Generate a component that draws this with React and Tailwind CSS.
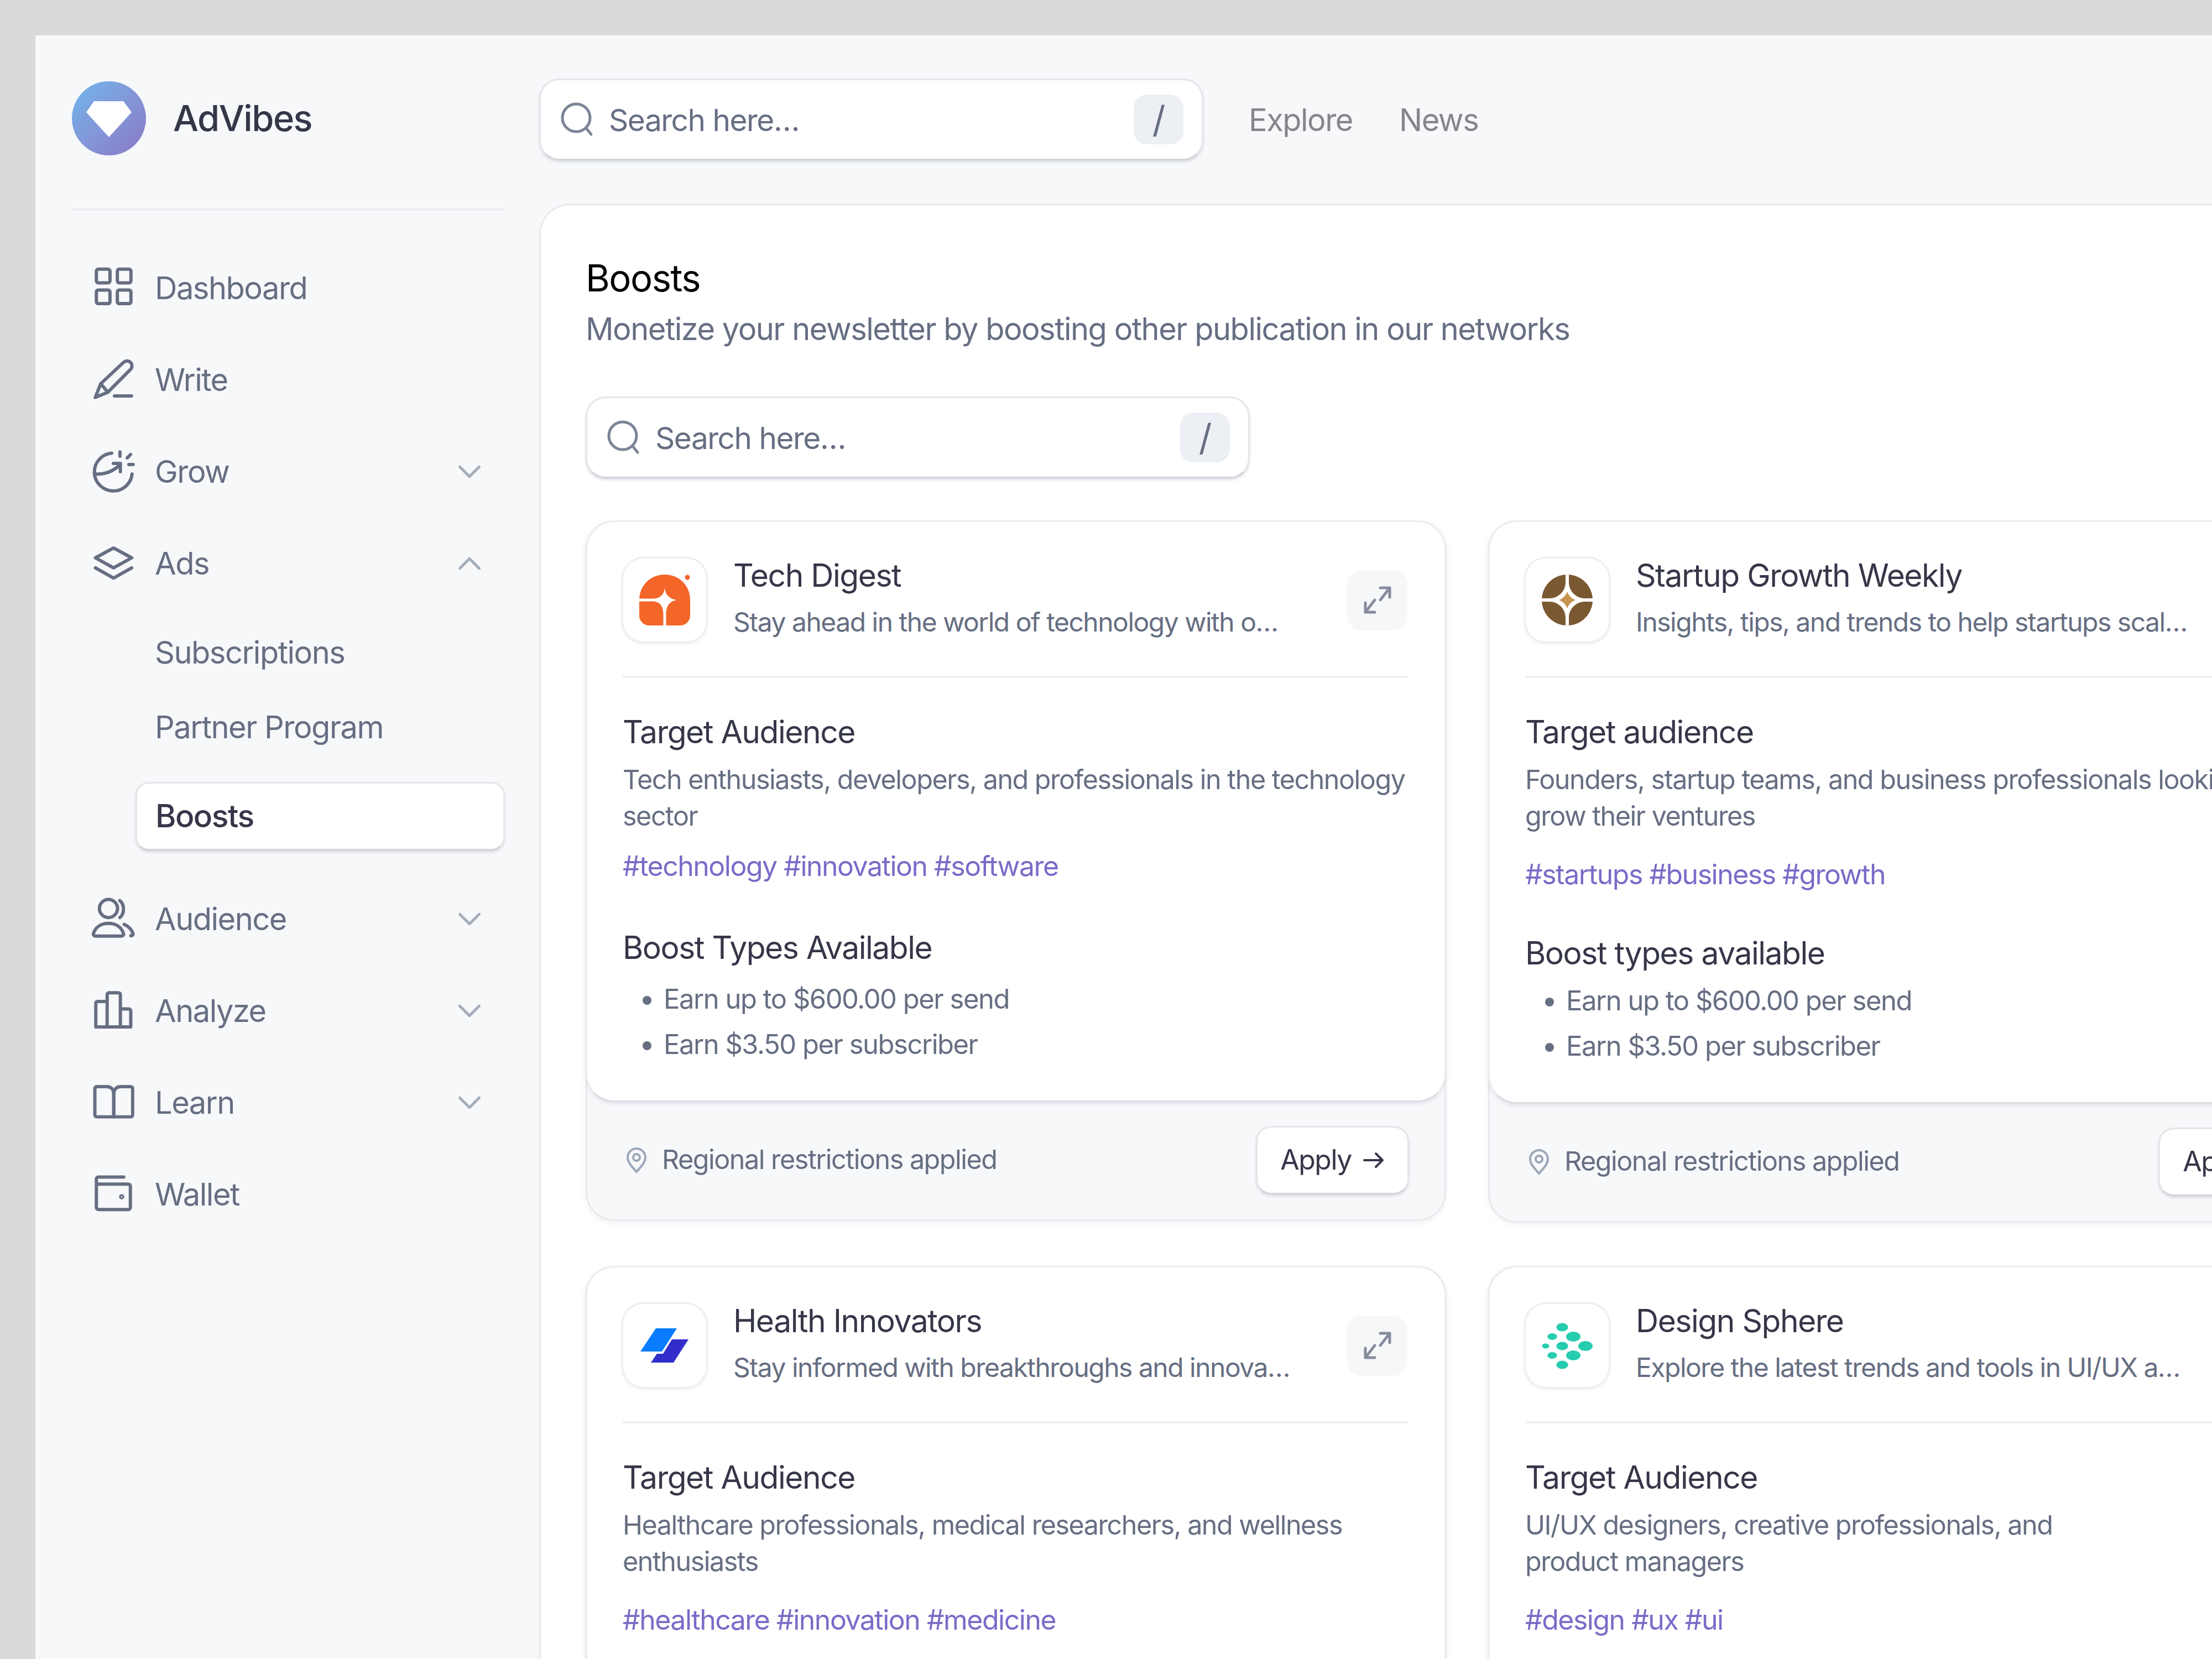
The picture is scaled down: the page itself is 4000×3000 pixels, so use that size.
import React from "react";
import { ChevronDown, ChevronUp } from "lucide-react";

const iconCls = "w-[82px] h-[82px] shrink-0 fill-none stroke-[#666e82] stroke-[1.75]";

function Icon({ children }) {
  return (
    <svg viewBox="0 0 24 24" className={iconCls} strokeLinecap="round" strokeLinejoin="round">
      {children}
    </svg>
  );
}

const navIcons = {
  dashboard: (
    <Icon>
      <rect x="3.300" y="2" width="7.200" height="7.200" rx="1" />
      <rect x="14.400" y="2" width="7.200" height="7.200" rx="1" />
      <rect x="3.300" y="13" width="7.200" height="7.200" rx="1" />
      <rect x="14.400" y="13" width="7.200" height="7.200" rx="1" />
    </Icon>
  ),
  write: (
    <Icon>
      <path d="M2.700 21.300L5.600 14L17.800 2.600A2.600 2.600 0 0 1 21.200 6.600L9.400 18.500z" />
      <path d="M5.600 14l3.800 4.500M12.900 20.500h9" />
    </Icon>
  ),
  grow: (
    <Icon>
      <path d="M11.400 2.200A10 10 0 1 0 22.200 13.200" />
      <path d="M2.300 13.200C7 13.600 12 12 16 8.200" />
      <path d="M12.300 7.600H16V12" />
      <path d="M15.800 1.500v2.300M21.400 2.900l-1.800 1.800M20.500 8.200h2.300" />
    </Icon>
  ),
  ads: (
    <Icon>
      <path d="M12.400 3.800l9.600 5.200-9.600 5.300-9.600-5.300z" />
      <path d="M2.800 14.300l9.600 5.400 9.600-5.400" />
    </Icon>
  ),
  audience: (
    <Icon>
      <circle cx="9.700" cy="6.400" r="4.800" />
      <path d="M15.700 2.200c2.600 2 2.600 7 0 9" />
      <path d="M3 21c-1 0-1.500-.6-1.200-1.500C3 16 6 14.300 9.700 14.300s6.700 1.700 7.900 5.200c.3.900-.2 1.500-1.200 1.500z" />
      <path d="M18 14.800c2.400 1 4.200 3 4.700 5 .1.700-.5 1-1.200 1" />
    </Icon>
  ),
  analyze: (
    <Icon>
      <path d="M9 7H4a1 1 0 0 0-1 1v12.500h18.500V12a1 1 0 0 0-1-1H16" />
      <path d="M9 20.500V3.400a1 1 0 0 1 1-1h5a1 1 0 0 1 1 1v17.100" />
    </Icon>
  ),
  learn: (
    <Icon>
      <path d="M12.500 19.500H3.500a1 1 0 0 1-1-1V4.500a1 1 0 0 1 1-1H9A3.500 3.500 0 0 1 12.500 7z" />
      <path d="M12.500 19.500h9a1 1 0 0 0 1-1V4.500a1 1 0 0 0-1-1H16A3.500 3.500 0 0 0 12.500 7z" />
    </Icon>
  ),
  wallet: (
    <Icon>
      <path d="M3.300 6.500V3.800a1 1 0 0 1 1-1h13.500" />
      <rect x="3.300" y="6.500" width="18" height="13.500" rx="1.200" />
      <circle cx="16.700" cy="13.200" r=".5" />
    </Icon>
  ),
};

function NavRow({ icon, label, chevron }) {
  return (
    <div className="flex items-center h-[166px] pl-[33px] pr-[29px]">
      {navIcons[icon]}
      <span className="ml-[35px] flex-1 text-[56px] text-[#666e82]">{label}</span>
      {chevron === "down" && <ChevronDown className="w-[70px] h-[70px] text-[#a3adba]" strokeWidth={1.7} />}
      {chevron === "up" && <ChevronUp className="w-[70px] h-[70px] text-[#a3adba]" strokeWidth={1.7} />}
    </div>
  );
}

function SearchBox() {
  return (
    <div className="flex items-center w-[1201px] h-[148px] shrink-0 pl-[36px] pr-[33px] bg-white rounded-[36px] border-[3px] border-[#e4e6ea] border-b-[#d3d5db] shadow-[0_3px_4px_rgba(180,184,195,0.45)]">
      <svg viewBox="0 0 60 66" className="w-[60px] h-[66px] shrink-0 fill-none stroke-[#7c8496] stroke-[5]" strokeLinecap="round">
        <circle cx="28" cy="30" r="25" />
        <path d="M47 50l8 10" />
      </svg>
      <span className="ml-[27px] mt-[2px] flex-1 text-[55px] text-[#666e82]">Search here…</span>
      <span className="flex items-center justify-center w-[90px] h-[90px] rounded-[24px] bg-[#eceff4] text-[66px] text-[#666e82]">/</span>
    </div>
  );
}

function TechLogo() {
  return (
    <svg viewBox="0 0 92 92" className="w-[92px] h-[92px]">
      <path d="M0 46C0 20 20 0 46 0s46 20 46 46v28a18 18 0 0 1-18 18H18A18 18 0 0 1 0 74z" fill="#f46528" />
      <path d="M46 24C47 36 54 44 68 46C54 48 48.500 58 48.500 72V92H43.500V72C43.500 58 38 48.500 24 48.500H0V43.500H24C38 43.500 45 36 46 24Z" fill="#fff" />
      <circle cx="87" cy="5" r="4.500" fill="#f46528" />
    </svg>
  );
}

function StartupLogo() {
  return (
    <svg viewBox="0 0 92 92" className="w-[92px] h-[92px]">
      <circle cx="46" cy="46" r="46" fill="#7a5832" />
      <path d="M43 0H49V14C49 30 62 43 78 43H92V49H78C62 49 49 62 49 78V92H43V78C43 62 30 49 14 49H0V43H14C30 43 43 30 43 14Z" fill="#fff" />
      <path d="M46 31Q50 42 61 46Q50 50 46 61Q42 50 31 46Q42 42 46 31Z" fill="#c89350" />
    </svg>
  );
}

function HealthLogo() {
  return (
    <svg viewBox="0 0 92 92" className="w-[92px] h-[92px]">
      <polygon points="30,15 68,15 41,57 2,57" fill="#0a7cff" />
      <polygon points="59,35 89,35 62,77 21,77 32,61 43,61" fill="#332ecb" />
    </svg>
  );
}

function DesignLogo() {
  const dots = [
    [37, 13, 10.700, 7.500], [57, 30, 13, 9], [19, 30, 8.700, 6], [79, 47, 13, 9], [37, 47, 10.700, 7.500],
    [7, 47, 6.500, 4.500], [57, 64, 13, 9], [19, 64, 8.700, 6], [37, 81, 10.700, 7.500],
  ];
  return (
    <svg viewBox="0 0 92 92" className="w-[92px] h-[92px]">
      {dots.map(([cx, cy, rx, ry]) => (
        <ellipse key={`${cx}-${cy}`} cx={cx} cy={cy} rx={rx} ry={ry} fill="#26ccae" />
      ))}
    </svg>
  );
}

function PublicationCard({ logo, name, blurb, audienceTitle, audience, tags, boostTitle, tagsMt, boostMt, listMt }) {
  return (
    <div className="rounded-[52px] bg-[#f7f8fa] border-[3px] border-[#e8e9ec] shadow-[0_4px_8px_rgba(200,203,212,0.25)]">
      <div className="-m-[3px] rounded-[52px] bg-white border-[3px] border-[#eceded] border-b-[#dcdde2] shadow-[0_4px_6px_rgba(190,193,205,0.3)] pl-[62px] pr-[67px] pt-[63px] pb-[60px]">
        <div className="flex items-center h-[156px]">
          <div className="flex items-center justify-center w-[156px] h-[156px] shrink-0 rounded-[40px] border-[3px] border-[#eeeeef] shadow-[0_2px_4px_rgba(200,203,212,0.3)]">
            {logo}
          </div>
          <div className="ml-[46px] -mt-[4px] flex-1 min-w-0">
            <p className="text-[57px] leading-[72px] text-[#353648]">{name}</p>
            <p className="mt-[12px] text-[48px] leading-[72px] text-[#666e82] whitespace-nowrap">{blurb}</p>
          </div>
          <div className="flex items-center justify-center w-[109px] h-[109px] shrink-0 rounded-[26px] bg-[#f6f7f9]">
            <svg viewBox="0 0 58 58" className="w-[58px] h-[58px] fill-none stroke-[#858c9e] stroke-[5]" strokeLinecap="round" strokeLinejoin="round">
              <path d="M34 7h17v17M51 7L34 29M7 34v17h17M7 51l17-22" />
            </svg>
          </div>
        </div>
        <div className="mt-[59px] ml-[2px] h-[4px] bg-[#eef0f4]" />
        <div className="pl-[2px]">
          <h3 className="mt-[58px] text-[57px] leading-[80px] text-[#353648]">{audienceTitle}</h3>
          <p className="mt-[13px] text-[48.500px] leading-[66px] text-[#666e82] whitespace-nowrap">{audience}</p>
          <p className={`${tagsMt} text-[50px] leading-[66px] text-[#7c6ac8]`}>{tags}</p>
          <h3 className={`${boostMt} text-[57px] leading-[80px] text-[#353648]`}>{boostTitle}</h3>
          <ul className={`${listMt} ml-[74px] list-disc marker:text-[#666e82] text-[49px] leading-[82px] text-[#666e82]`}>
            <li>Earn up to $600.00 per send</li>
            <li>Earn $3.50 per subscriber</li>
          </ul>
        </div>
      </div>
      <div className="flex items-center justify-between pl-[69px] pr-[64px] h-[215px]">
        <div className="flex items-center">
          <svg viewBox="0 0 40 48" className="w-[40px] h-[48px] fill-none stroke-[#9aa7b6] stroke-[4]">
            <path d="M20 45C10 34 4 27 4 19a16 16 0 0 1 32 0c0 8-6 15-16 26z" />
            <circle cx="20" cy="19" r="6" />
          </svg>
          <span className="ml-[26px] text-[48.500px] text-[#666e82]">Regional restrictions applied</span>
        </div>
        <div className="flex items-center justify-center gap-[20px] w-[277px] h-[124px] bg-white rounded-[28px] border-[3px] border-[#e4e6ea] border-b-[#d3d5db] shadow-[0_3px_4px_rgba(180,184,195,0.45)]">
          <span className="text-[50px] text-[#353648]">Apply</span>
          <svg viewBox="0 0 40 32" className="w-[40px] h-[32px] fill-none stroke-[#353648] stroke-[4]" strokeLinecap="round" strokeLinejoin="round">
            <path d="M3 16h33M24 4l12 12-12 12" />
          </svg>
        </div>
      </div>
    </div>
  );
}

const publications = [
  {
    logo: <TechLogo />,
    name: "Tech Digest",
    blurb: "Stay ahead in the world of technology with o…",
    audienceTitle: "Target Audience",
    audience: <>Tech enthusiasts, developers, and professionals in the technology<br />sector</>,
    tags: "#technology #innovation #software",
    boostTitle: "Boost Types Available",
    tagsMt: "mt-[24px]",
    boostMt: "mt-[75px]",
    listMt: "mt-[12px]",
  },
  {
    logo: <StartupLogo />,
    name: "Startup Growth Weekly",
    blurb: "Insights, tips, and trends to help startups scal…",
    audienceTitle: "Target audience",
    audience: <>Founders, startup teams, and business professionals looking to<br />grow their ventures</>,
    tags: "#startups #business #growth",
    boostTitle: "Boost types available",
    tagsMt: "mt-[39px]",
    boostMt: "mt-[70px]",
    listMt: "mt-[5px]",
  },
  {
    logo: <HealthLogo />,
    name: "Health Innovators",
    blurb: "Stay informed with breakthroughs and innova…",
    audienceTitle: "Target Audience",
    audience: <>Healthcare professionals, medical researchers, and wellness<br />enthusiasts</>,
    tags: "#healthcare #innovation #medicine",
    boostTitle: "Boost Types Available",
    tagsMt: "mt-[39px]",
    boostMt: "mt-[70px]",
    listMt: "mt-[5px]",
  },
  {
    logo: <DesignLogo />,
    name: "Design Sphere",
    blurb: "Explore the latest trends and tools in UI/UX a…",
    audienceTitle: "Target Audience",
    audience: <>UI/UX designers, creative professionals, and<br />product managers</>,
    tags: "#design #ux #ui",
    boostTitle: "Boost Types Available",
    tagsMt: "mt-[39px]",
    boostMt: "mt-[70px]",
    listMt: "mt-[5px]",
  },
];

export default function App() {
  return (
    <div className="w-[4000px] h-[3000px] overflow-hidden bg-[#d9dadc] pl-[64px] pt-[64px] font-['Inter',sans-serif] tracking-[-1.5px]">
      <div className="flex h-[2936px] bg-[#f7f8fa]">
        {/* --- SIDEBAR --- */}
        <aside className="w-[911px] shrink-0 pl-[66px] pr-[62px]">
          <div className="flex items-center h-[313px]">
            <div className="w-[134px] h-[134px] rounded-full bg-gradient-to-br from-[#6fb6ec] to-[#8b77c6] -mt-[14px]">
              <svg viewBox="0 0 134 134" className="w-[134px] h-[134px]">
                <polygon points="40,36 93,36 108,56 67,101 26,56" fill="#fff" />
              </svg>
            </div>
            <span className="ml-[49px] -mt-[14px] text-[65px] font-medium text-[#353648]">AdVibes</span>
          </div>
          <div className="h-[4px] mr-[1px] bg-[#ecedee]" />
          <nav className="mt-[57px]">
            <NavRow icon="dashboard" label="Dashboard" />
            <NavRow icon="write" label="Write" />
            <NavRow icon="grow" label="Grow" chevron="down" />
            <NavRow icon="ads" label="Ads" chevron="up" />
            <div className="mt-[10px] pl-[150px] text-[56px] text-[#666e82]">
              <p className="flex items-center h-[135px]">Subscriptions</p>
              <p className="flex items-center h-[135px]">Partner Program</p>
            </div>
            <div className="flex items-center ml-[115px] mt-[32px] h-[124px] pl-[33px] bg-white rounded-[24px] border-[3px] border-[#e4e6ea] border-b-[#d3d5db] shadow-[0_3px_4px_rgba(180,184,195,0.45)]">
              <span className="text-[57px] font-medium text-[#353648]">Boosts</span>
            </div>
            <div className="mt-[41px]">
              <NavRow icon="audience" label="Audience" chevron="down" />
              <NavRow icon="analyze" label="Analyze" chevron="down" />
              <NavRow icon="learn" label="Learn" chevron="down" />
              <NavRow icon="wallet" label="Wallet" />
            </div>
          </nav>
        </aside>

        {/* --- MAIN --- */}
        <main className="flex-1 min-w-0">
          <div className="flex items-center h-[304px]">
            <SearchBox />
            <span className="ml-[82px] mt-[2px] text-[56px] text-[#85868a]">Explore</span>
            <span className="ml-[84px] mt-[2px] text-[56px] text-[#85868a]">News</span>
          </div>
          <div className="h-[2632px] overflow-hidden bg-white rounded-tl-[56px] border-l-[3px] border-t-[3px] border-[#e8e9ec] pl-[81px] pt-[92px]">
            <h1 className="text-[67px] leading-[80px] text-black">Boosts</h1>
            <p className="mt-[12px] text-[56px] leading-[80px] text-[#666e82]">Monetize your newsletter by boosting other publication in our networks</p>
            <div className="mt-[82px]">
              <SearchBox />
            </div>
            <div className="mt-[76px] grid grid-cols-[1556px_1556px] gap-x-[76px] gap-y-[78px] items-start">
              {publications.map((pub) => (
                <PublicationCard key={pub.name} {...pub} />
              ))}
            </div>
          </div>
        </main>
      </div>
    </div>
  );
}
